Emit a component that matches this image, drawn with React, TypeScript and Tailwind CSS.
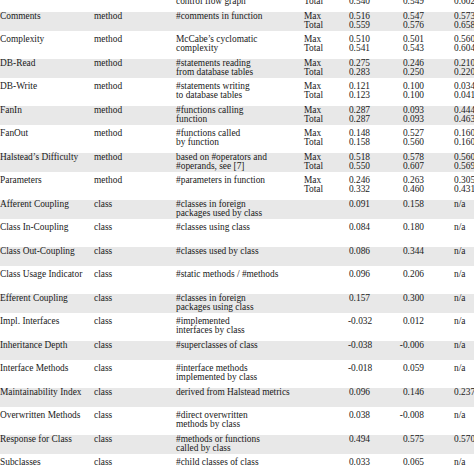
type Row = {
  name: string;
  kind: string;
  desc: string[];
  max?: string[];
  total?: string[];
  vals?: string[];
};

const rows: Row[] = [
  { name: "Block Depth", kind: "method", desc: ["#nodes in", "control flow graph"], max: ["0.512", "0.521", "0.587"], total: ["0.540", "0.549", "0.602"] },
  { name: "Comments", kind: "method", desc: ["#comments in function"], max: ["0.516", "0.547", "0.573"], total: ["0.559", "0.576", "0.658"] },
  { name: "Complexity", kind: "method", desc: ["McCabe\u2019s cyclomatic", "complexity"], max: ["0.510", "0.501", "0.560"], total: ["0.541", "0.543", "0.604"] },
  { name: "DB-Read", kind: "method", desc: ["#statements reading", "from database tables"], max: ["0.275", "0.246", "0.210"], total: ["0.283", "0.250", "0.220"] },
  { name: "DB-Write", kind: "method", desc: ["#statements writing", "to database tables"], max: ["0.121", "0.100", "0.034"], total: ["0.123", "0.100", "0.041"] },
  { name: "FanIn", kind: "method", desc: ["#functions calling", "function"], max: ["0.287", "0.093", "0.444"], total: ["0.287", "0.093", "0.463"] },
  { name: "FanOut", kind: "method", desc: ["#functions called", "by function"], max: ["0.148", "0.527", "0.160"], total: ["0.158", "0.560", "0.160"] },
  { name: "Halstead\u2019s Difficulty", kind: "method", desc: ["based on #operators and", "#operands, see [7]"], max: ["0.518", "0.578", "0.560"], total: ["0.550", "0.607", "0.569"] },
  { name: "Parameters", kind: "method", desc: ["#parameters in function"], max: ["0.246", "0.263", "0.305"], total: ["0.332", "0.460", "0.431"] },
  { name: "Afferent Coupling", kind: "class", desc: ["#classes in foreign", "packages used by class"], vals: ["0.091", "0.158", "n/a"] },
  { name: "Class In-Coupling", kind: "class", desc: ["#classes using class"], vals: ["0.084", "0.180", "n/a"] },
  { name: "Class Out-Coupling", kind: "class", desc: ["#classes used by class"], vals: ["0.086", "0.344", "n/a"] },
  { name: "Class Usage Indicator", kind: "class", desc: ["#static methods / #methods"], vals: ["0.096", "0.206", "n/a"] },
  { name: "Efferent Coupling", kind: "class", desc: ["#classes in foreign", "packages using class"], vals: ["0.157", "0.300", "n/a"] },
  { name: "Impl. Interfaces", kind: "class", desc: ["#implemented", "interfaces by class"], vals: ["-0.032", "0.012", "n/a"] },
  { name: "Inheritance Depth", kind: "class", desc: ["#superclasses of class"], vals: ["-0.038", "-0.006", "n/a"] },
  { name: "Interface Methods", kind: "class", desc: ["#interface methods", "implemented by class"], vals: ["-0.018", "0.059", "n/a"] },
  { name: "Maintainability Index", kind: "class", desc: ["derived from Halstead metrics"], vals: ["0.096", "0.146", "0.237"] },
  { name: "Overwritten Methods", kind: "class", desc: ["#direct overwritten", "methods by class"], vals: ["0.038", "-0.008", "n/a"] },
  { name: "Response for Class", kind: "class", desc: ["#methods or functions", "called by class"], vals: ["0.494", "0.575", "0.570"] },
  { name: "Subclasses", kind: "class", desc: ["#child classes of class"], vals: ["0.033", "0.065", "n/a"] },
];

function Lines({ items }: { items: string[] }) {
  return (
    <>
      {items.map((t, i) => (
        <div key={i} className="whitespace-nowrap">
          {t}
        </div>
      ))}
    </>
  );
}

function MetricRow({ row, shaded }: { row: Row; shaded: boolean }) {
  const col = (i: number) =>
    row.vals ? [row.vals[i]] : [row.max![i], row.total![i]];

  return (
    <div
      className={
        shaded
          ? "h-[24px] bg-[#e8e8e8] border-b-[5px] border-white"
          : "h-[24px]"
      }
    >
      <div className="flex -mt-[0.5px]">
        <div className="w-[94px] shrink-0 whitespace-nowrap">{row.name}</div>
        <div className="w-[82px] shrink-0">{row.kind}</div>
        <div className="w-[128px] shrink-0">
          <Lines items={row.desc} />
        </div>
        <div className="w-[44px] shrink-0">
          {row.vals ? null : <Lines items={["Max", "Total"]} />}
        </div>
        <div className="w-[22px] shrink-0 text-right">
          <Lines items={col(0)} />
        </div>
        <div className="w-[54px] shrink-0 text-right">
          <Lines items={col(1)} />
        </div>
        <div className="w-[60px] shrink-0 pl-[30px]">
          <Lines items={col(2)} />
        </div>
      </div>
    </div>
  );
}

export default function App() {
  return (
    <div className="w-[474px] h-[474px] overflow-hidden bg-white">
      <div className="-mt-[12px] text-[9.4px] leading-[9.3px] text-[#1a1a1a] font-['Liberation_Serif',serif]">
        {rows.map((row, i) => (
          <MetricRow key={row.name} row={row} shaded={i % 2 === 1} />
        ))}
      </div>
    </div>
  );
}
